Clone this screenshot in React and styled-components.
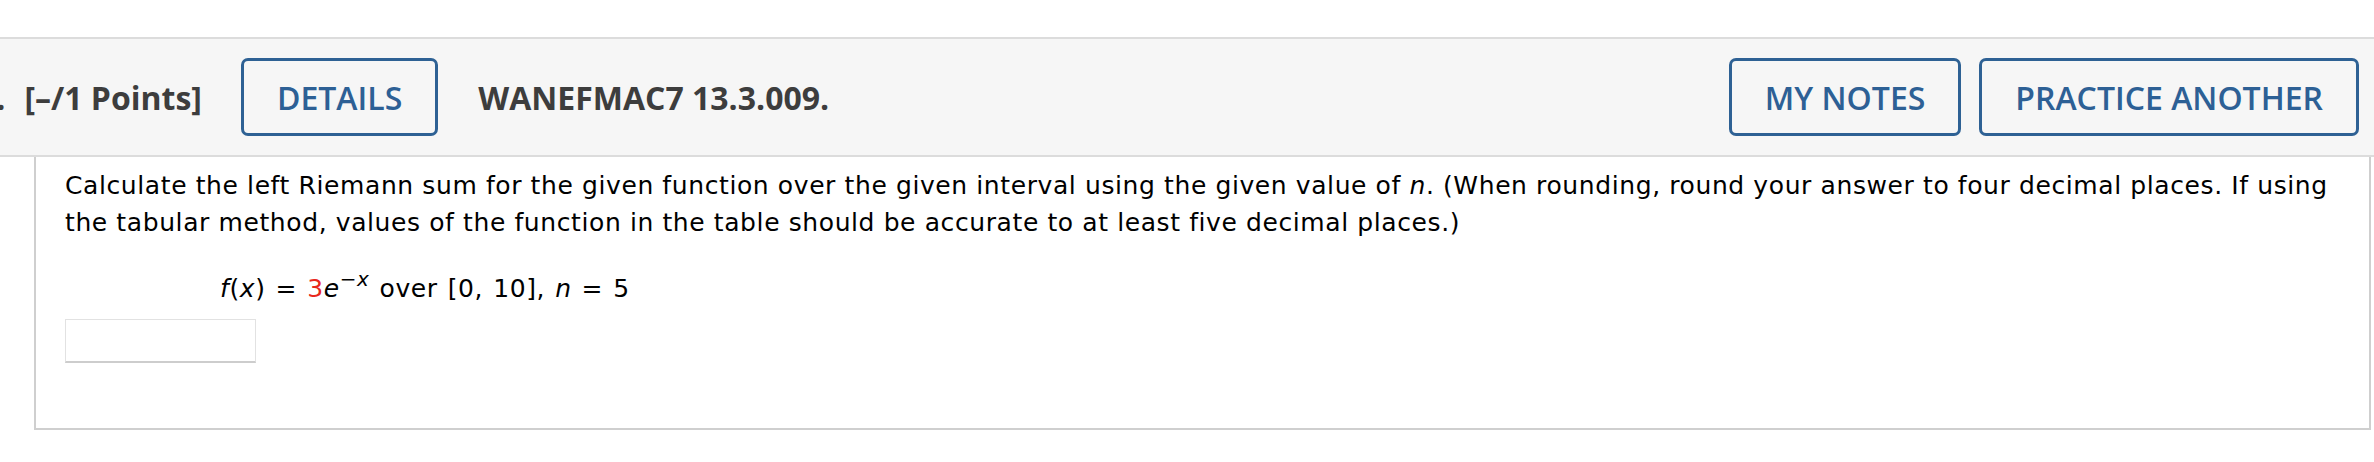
import React from 'react'
import styled, { createGlobalStyle } from 'styled-components';

const GlobalStyle = createGlobalStyle`
  html, body {
    margin: 0;
    padding: 0;
    background: #fff;
    overflow: hidden;
  }
`;

const Page = styled.div`
  width: 2374px;
  height: 462px;
  padding-top: 37px;
  box-sizing: border-box;
  overflow: hidden;
`;

const Header = styled.div`
  display: flex;
  align-items: center;
  height: 116px;
  padding-right: 15px;
  background-color: #f6f6f6;
  border-top: 2px solid #dcdcdc;
  border-bottom: 2px solid #dcdcdc;
  font-family: "Open Sans", "Noto Sans", sans-serif;
  font-size: 32px;
`;

const Number = styled.span`
  margin-left: -22px;
  font-weight: 700;
  color: #3d3d3d;
`;

const Points = styled.span`
  margin-left: 19px;
  font-weight: 700;
  color: #3d3d3d;
  white-space: nowrap;
`;

const Title = styled.span`
  margin-left: 40px;
  font-weight: 700;
  color: #3d3d3d;
  white-space: nowrap;
`;

const Spacer = styled.div`
  flex: 1;
`;

const Button = styled.button`
  height: 78px;
  margin-left: ${p => p.$gap || 0}px;
  padding: 0 ${p => p.$pad || 33}px;
  background: transparent;
  border: 3px solid #2e6194;
  border-radius: 7px;
  color: #2d6095;
  font-family: "Open Sans", "Noto Sans", sans-serif;
  font-size: 32px;
  font-weight: 600;
  white-space: nowrap;
  cursor: pointer;
`;

const Content = styled.div`
  margin-left: 34px;
  margin-right: 3px;
  height: 273px;
  box-sizing: border-box;
  padding: 10px 28px 0 29px;
  border: 2px solid #cfcfcf;
  border-top: none;
  font-family: "DejaVu Sans", Verdana, sans-serif;
  font-size: 25px;
  letter-spacing: 0.6px;
  line-height: 37px;
  color: #000;
`;

const Prompt = styled.p`
  margin: 0;
`;

const Formula = styled.p`
  margin: 29px 0 0 155px;
  word-spacing: 1.5px;
`;

const I = styled.i`
  font-style: italic;
`;

const Red = styled.span`
  color: #e8281c;
`;

const Sup = styled.sup`
  font-size: 80%;
  line-height: 0;
  vertical-align: 0.55em;
`;

const Answer = styled.input`
  display: block;
  margin-top: 12px;
  width: 191px;
  height: 44px;
  box-sizing: border-box;
  border: 1px solid #e2e2e2;
  border-bottom: 2px solid #cdcdcd;
  background: #fff;
  outline: none;
`;

export default function App() {
    return (
        <Page>
            <GlobalStyle />
            <Header>
                <Number>1.</Number>
                <Points>[–/1 Points]</Points>
                <Button $gap={39}>DETAILS</Button>
                <Title>WANEFMAC7 13.3.009.</Title>
                <Spacer />
                <Button>MY NOTES</Button>
                <Button $gap={18}>PRACTICE ANOTHER</Button>
            </Header>
            <Content>
                <Prompt>
                    Calculate the left Riemann sum for the given function over the given interval using the given value of <I>n</I>. (When rounding, round your answer to four decimal places. If using the tabular method, values of the function in the table should be accurate to at least five decimal places.)
                </Prompt>
                <Formula>
                    <I>f</I>(<I>x</I>) = <Red>3</Red><I>e</I><Sup>−<I>x</I></Sup> over [0, 10], <I>n</I> = 5
                </Formula>
                <Answer type="text" />
            </Content>
        </Page>
    )
}
